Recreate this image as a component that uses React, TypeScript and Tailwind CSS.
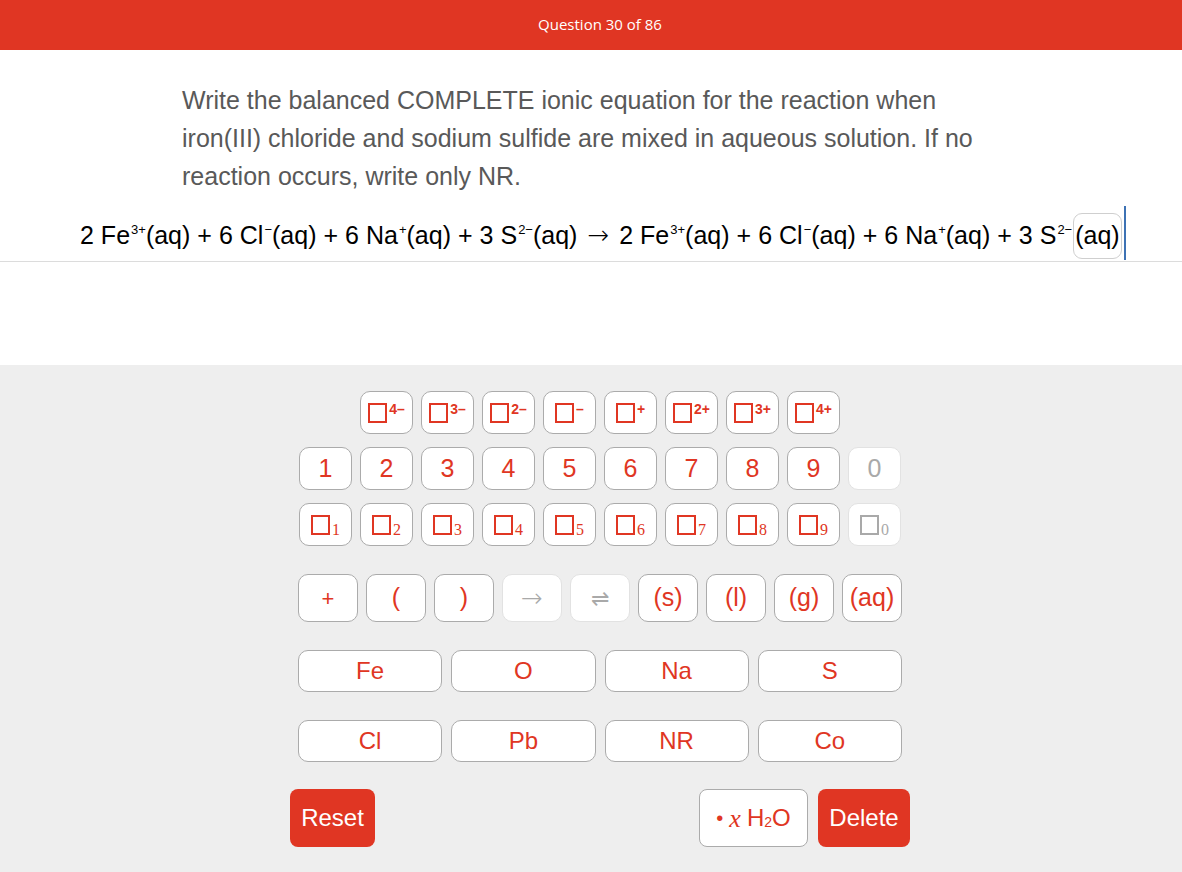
import React from 'react'

const RED = 'text-[#e03623]'

const species = [
  { coef: '2', el: 'Fe', charge: '3+' },
  { coef: '6', el: 'Cl', charge: '−' },
  { coef: '6', el: 'Na', charge: '+' },
  { coef: '3', el: 'S', charge: '2−' },
]

function Side({ last }: { last?: boolean }) {
  return (
    <>
      {species.map((s, i) => (
        <React.Fragment key={i}>
          {i > 0 && <span className="mx-[7px]">+</span>}
          <span>{s.coef}&nbsp;{s.el}</span>
          <span className="relative -top-[6px] text-[13px] ml-[1px]">{s.charge}</span>
          {last && i === species.length - 1 ? (
            <span className="inline-flex items-center h-[46px] px-[1px] ml-[1px] rounded-[9px] border border-[#cfcfcf]">(aq)</span>
          ) : (
            <span>(aq)</span>
          )}
        </React.Fragment>
      ))}
    </>
  )
}

function Key({
  children,
  className = '',
  off = false,
}: {
  children: React.ReactNode
  className?: string
  off?: boolean
}) {
  return (
    <button
      className={
        'flex items-center justify-center bg-white rounded-[10px] border ' +
        (off ? 'border-[#e2e2e2] text-[#a9a9a9] ' : 'border-[#ababab] text-[#e03623] ') +
        className
      }
    >
      {children}
    </button>
  )
}

function Square({ off = false }: { off?: boolean }) {
  return (
    <span
      className={
        'inline-block w-[19px] h-[20px] border-2 ' + (off ? 'border-[#a9a9a9]' : 'border-[#e03623]')
      }
    />
  )
}

const ions = ['4–', '3–', '2–', '–', '+', '2+', '3+', '4+']
const digits = ['1', '2', '3', '4', '5', '6', '7', '8', '9']

export default function App() {
  return (
    <div className="min-h-[872px] bg-white flex flex-col" style={{ fontFamily: '"Liberation Sans", Arial, sans-serif' }}>
      {/* header */}
      <div className="h-[50px] bg-[#e03623] flex items-center justify-center pl-[18px]">
        <span className="text-white text-[15px] -mt-[2px]" style={{ fontFamily: '"Open Sans", sans-serif' }}>
          Question 30 of 86
        </span>
      </div>

      {/* question */}
      <div className="pl-[182px] pt-[31px] text-[25px] leading-[38px] text-[#595959]">
        <div>Write the balanced COMPLETE ionic equation for the reaction when</div>
        <div>iron(III) chloride and sodium sulfide are mixed in aqueous solution. If no</div>
        <div>reaction occurs, write only NR.</div>
      </div>

      {/* answer line */}
      <div className="mt-[10px] h-[57px] border-b border-[#dcdcdc] flex items-center pl-[80px] pt-[5px] text-[25px] text-black whitespace-nowrap">
        <Side />
        <span className="mx-[10px] text-[26px] font-extralight" style={{ fontFamily: '"DejaVu Sans", sans-serif' }}>→</span>
        <Side last />
        <span className="inline-block w-[2px] h-[54px] bg-[#3d72b4] ml-[2px] -mt-[5px]" />
      </div>

      <div className="h-[103px]" />

      {/* keypad */}
      <div className="flex-1 bg-[#eeeeee] pt-[26px] pb-[25px]">
        <div className="ml-[290px] w-[620px] flex flex-col">
          <div className="px-[9px] grid grid-cols-10 gap-x-[8px] w-[620px]">
            <div />
            {ions.map((c) => (
              <Key key={c} className="h-[43px]">
                <span className="flex items-start">
                  <Square />
                  <span className="text-[14px] font-bold leading-none ml-[2px] -mt-[1px]">{c}</span>
                </span>
              </Key>
            ))}
            <div />
          </div>

          <div className="mt-[13px] px-[9px] grid grid-cols-10 gap-x-[8px]">
            {digits.map((d) => (
              <Key key={d} className="h-[43px] text-[25px]">{d}</Key>
            ))}
            <Key off className="h-[43px] text-[25px]">0</Key>
          </div>

          <div className="mt-[13px] px-[9px] grid grid-cols-10 gap-x-[8px]">
            {[...digits, '0'].map((d) => (
              <Key key={d} off={d === '0'} className="h-[43px]">
                <span className="flex items-end">
                  <Square off={d === '0'} />
                  <span className="text-[16px] leading-none ml-[2px] -mb-[3px]" style={{ fontFamily: '"Liberation Serif", serif' }}>
                    {d}
                  </span>
                </span>
              </Key>
            ))}
          </div>

          <div className="mt-[28px] px-[8px] grid grid-cols-9 gap-x-[8px] text-[25px]">
            <Key className="h-[48px] text-[22px]">+</Key>
            <Key className="h-[48px]">(</Key>
            <Key className="h-[48px]">)</Key>
            <Key off className="h-[48px]">
              <span className="text-[26px] font-extralight" style={{ fontFamily: '"DejaVu Sans", sans-serif' }}>→</span>
            </Key>
            <Key off className="h-[48px]">
              <span className="text-[22px] font-extralight" style={{ fontFamily: '"DejaVu Sans", sans-serif' }}>⇌</span>
            </Key>
            <Key className="h-[48px]">(s)</Key>
            <Key className="h-[48px]">(l)</Key>
            <Key className="h-[48px]">(g)</Key>
            <Key className="h-[48px]">(aq)</Key>
          </div>

          <div className="mt-[28px] px-[8px] grid grid-cols-4 gap-x-[9px] text-[24px]">
            {['Fe', 'O', 'Na', 'S'].map((e) => (
              <Key key={e} className="h-[42px]">{e}</Key>
            ))}
          </div>

          <div className="mt-[28px] px-[8px] grid grid-cols-4 gap-x-[9px] text-[24px]">
            {['Cl', 'Pb', 'NR', 'Co'].map((e) => (
              <Key key={e} className="h-[42px]">{e}</Key>
            ))}
          </div>

          <div className="mt-[27px] flex items-center text-[24px]">
            <button className="h-[58px] w-[85px] rounded-[8px] bg-[#e03623] text-white">Reset</button>
            <div className="flex-1" />
            <button className={'h-[58px] w-[109px] rounded-[8px] bg-white border border-[#ababab] flex items-center justify-center ' + RED}>
              <span className="text-[20px] mr-[6px]">•</span>
              <span className="italic text-[26px] mr-[6px]" style={{ fontFamily: '"Liberation Serif", serif' }}>x</span>
              <span>H</span>
              <span className="text-[14px] relative top-[4px]">2</span>
              <span>O</span>
            </button>
            <button className="ml-[10px] h-[58px] w-[92px] rounded-[8px] bg-[#e03623] text-white">Delete</button>
          </div>
        </div>
      </div>
    </div>
  )
}
